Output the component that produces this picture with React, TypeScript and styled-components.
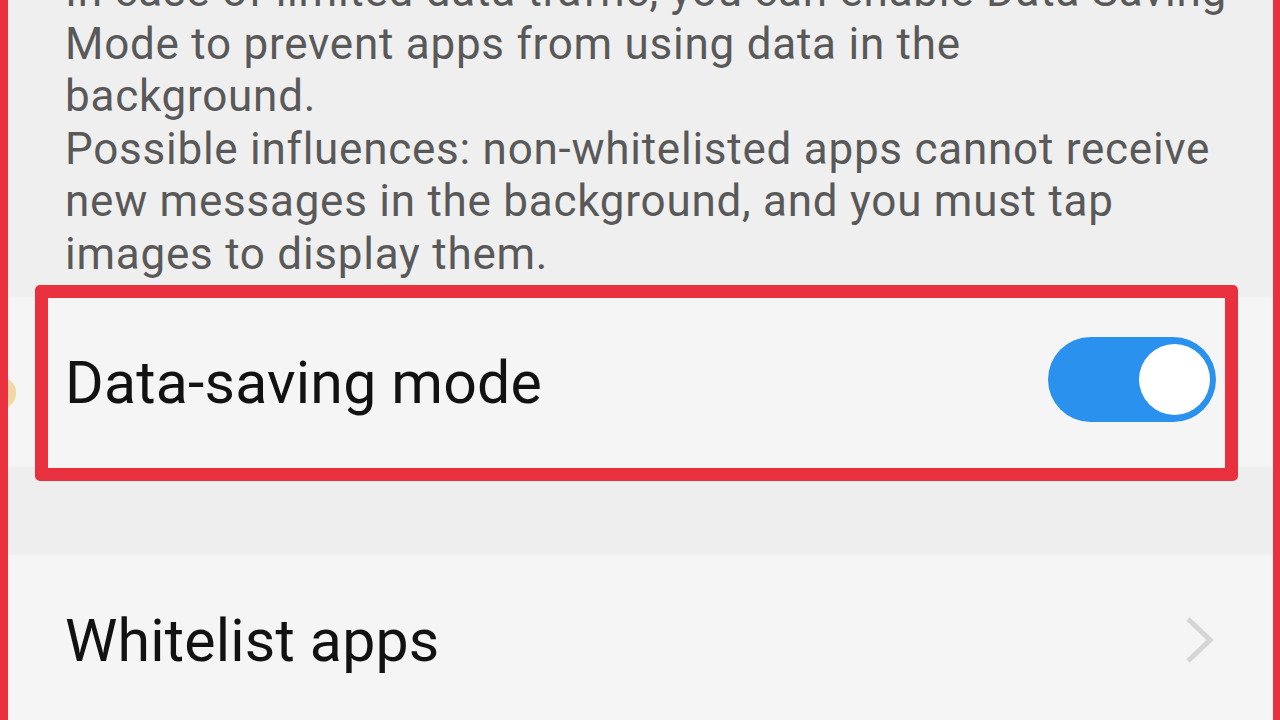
import React from 'react';
import styled, { createGlobalStyle } from 'styled-components';

const GlobalStyle = createGlobalStyle`
  html, body {
    margin: 0;
    padding: 0;
    background: #efefef;
    overflow: hidden;
  }
`;

const Frame = styled.div`
  position: relative;
  width: 1280px;
  height: 720px;
  display: flex;
  border-left: 8px solid #e8303f;
  border-right: 7px solid #e8303f;
  box-sizing: border-box;
  overflow: hidden;
  font-family: Roboto, "Noto Sans", sans-serif;
`;

const EdgeMark = styled.div`
  position: absolute;
  left: -6px;
  top: 378px;
  width: 14px;
  height: 30px;
  border-radius: 0 15px 15px 0;
  background: #f1d9a6;
`;

const Screen = styled.div`
  flex: 1;
  min-width: 0;
  display: flex;
  flex-direction: column;
`;

const Description = styled.div`
  flex-shrink: 0;
  margin-top: -35px;
  padding: 0 57px 17px 57px;
  background: #efefef;
  color: #595959;
  font-size: 44px;
  line-height: 52.5px;
  letter-spacing: 0.75px;
  white-space: nowrap;
  overflow: hidden;
`;

const Row = styled.div<{ $height: number }>`
  position: relative;
  height: ${({ $height }) => $height}px;
  flex-shrink: 0;
  display: flex;
  align-items: center;
  justify-content: space-between;
  padding: 0 57px;
  background: #f5f5f5;
`;

const Title = styled.span`
  color: #121212;
  font-size: 59px;
  line-height: 1;
  letter-spacing: 0.2px;
`;

const Gap = styled.div`
  height: 88px;
  flex-shrink: 0;
  background: #eeeeee;
`;

const Switch = styled.div<{ $on: boolean }>`
  width: 168px;
  height: 85px;
  border-radius: 43px;
  background: ${({ $on }) => ($on ? '#2a92ee' : '#cfcfcf')};
  display: flex;
  align-items: center;
  justify-content: ${({ $on }) => ($on ? 'flex-end' : 'flex-start')};
  padding: 0 6px;
  box-sizing: border-box;
  margin-top: -5px;
`;

const Knob = styled.div`
  width: 71px;
  height: 71px;
  border-radius: 50%;
  background: #ffffff;
`;

const Highlight = styled.div`
  position: absolute;
  left: 27px;
  top: -12px;
  width: 1203px;
  height: 196px;
  border: 13px solid #e8303f;
  border-radius: 5px;
  box-sizing: border-box;
  pointer-events: none;
`;

const Chevron = () => (
  <svg width="30" height="48" viewBox="0 0 30 48" style={{ marginRight: 2 }}>
    <path d="M4 3 L26 24 L4 45" fill="none" stroke="#d6d6d6" strokeWidth="5" />
  </svg>
);

export default function App() {
  return (
    <>
      <GlobalStyle />
      <Frame>
        <Screen>
          <Description>
            In case of limited data traffic, you can enable Data Saving<br />
            Mode to prevent apps from using data in the<br />
            background.<br />
            Possible influences: non-whitelisted apps cannot receive<br />
            new messages in the background, and you must tap<br />
            images to display them.
          </Description>
          <Row $height={170}>
            <Title>Data-saving mode</Title>
            <Switch $on>
              <Knob />
            </Switch>
            <Highlight />
          </Row>
          <Gap />
          <Row $height={170}>
            <Title>Whitelist apps</Title>
            <Chevron />
          </Row>
        </Screen>
        <EdgeMark />
      </Frame>
    </>
  );
}
